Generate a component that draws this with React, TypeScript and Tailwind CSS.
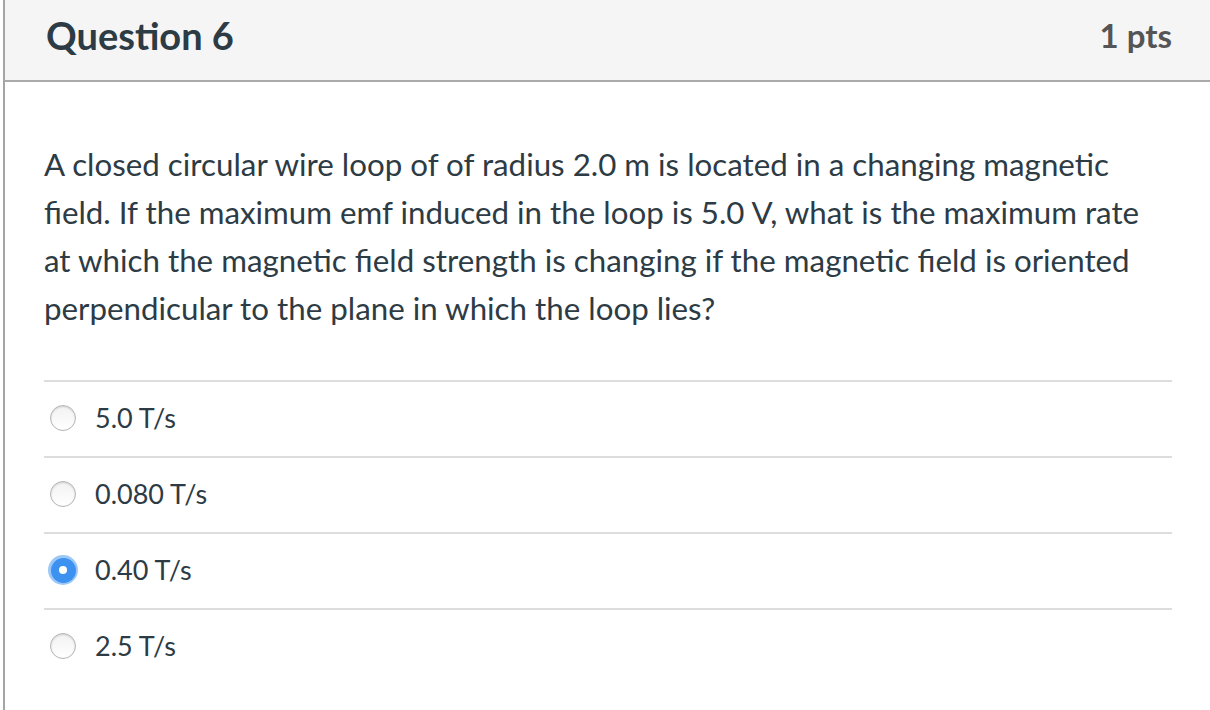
const answers = [
  { label: "5.0 T/s", checked: false },
  { label: "0.080 T/s", checked: false },
  { label: "0.40 T/s", checked: true },
  { label: "2.5 T/s", checked: false },
];

const Radio = ({ checked }: { checked: boolean }) =>
  checked ? (
    <div className="w-[30px] h-[30px] rounded-full bg-[#9cc8f7] flex items-center justify-center shrink-0">
      <div className="w-[25px] h-[25px] rounded-full bg-[#3d91f0] flex items-center justify-center">
        <div className="w-[8px] h-[8px] rounded-full bg-white" />
      </div>
    </div>
  ) : (
    <div className="w-[30px] h-[30px] flex items-center justify-center shrink-0">
      <div className="w-[26px] h-[26px] rounded-full border border-[#b5b5b5] bg-gradient-to-b from-[#f2f2f2] to-white shadow-[inset_0_1px_2px_rgba(0,0,0,0.15)]" />
    </div>
  );

export default function App() {
  return (
    <div className="w-[1210px] h-[710px] bg-white overflow-hidden pl-[3px] font-['Lato',sans-serif]">
      <div className="h-full border-l-2 border-[#a5a5a5] bg-white">
        <div className="h-[82px] bg-[#f5f5f5] border-b-2 border-[#aaaaaa] flex items-center justify-between pl-[41px] pr-[38px]">
          <h2 className="text-[38px] font-bold text-[#2d3b45] mb-[10px]">Question 6</h2>
          <span className="text-[33px] font-bold text-[#555555] mb-[8px]">1 pts</span>
        </div>
        <div className="pl-[39px] pr-[38px] pt-[58px]">
          <p className="text-[31.3px] leading-[48px] text-[#2d3b45] w-[1112px]">
            A closed circular wire loop of of radius 2.0 m is located in a changing magnetic field. If the maximum emf induced in the loop is 5.0 V, what is the maximum rate at which the magnetic field strength is changing if the magnetic field is oriented perpendicular to the plane in which the loop lies?
          </p>
          <div className="mt-[48px]">
            {answers.map((a) => (
              <div key={a.label} className="border-t-2 border-[#dddddd] h-[76px] flex items-center gap-[17px] pl-[4px] pb-[2px]">
                <Radio checked={a.checked} />
                <span className="text-[27px] text-[#2d3b45]">{a.label}</span>
              </div>
            ))}
          </div>
        </div>
      </div>
    </div>
  );
}
